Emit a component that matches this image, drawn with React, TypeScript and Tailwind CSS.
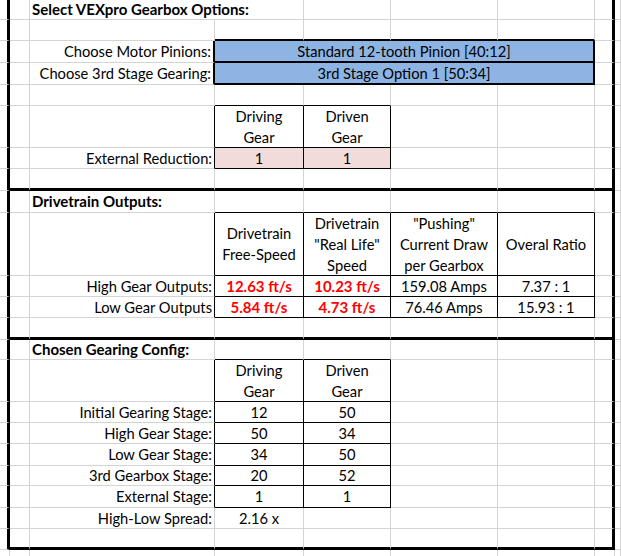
import React from "react";

type B = "g" | "k" | "k2" | "k3";

const RB: Record<B, string> = {
  g: "border-r border-r-[#d4d4d4]",
  k: "border-r border-r-black",
  k2: "border-r-2 border-r-black",
  k3: "border-r-[3px] border-r-black",
};
const BB: Record<B, string> = {
  g: "border-b border-b-[#d4d4d4]",
  k: "border-b border-b-black",
  k2: "border-b-2 border-b-black",
  k3: "border-b-[3px] border-b-black",
};

const inRange = (v: number, a: number, b: number) => v >= a && v <= b;

function rightBorder(row: number, col: number): B {
  if ((col === 0 || col === 7) && row <= 21) return "k3";
  if ((col === 2 || col === 6) && (row === 2 || row === 3)) return "k2";
  if (col === 2 && (row === 5 || row === 6 || inRange(row, 9, 11) || inRange(row, 14, 19))) return "k";
  if ((col === 3 || col === 4) && (row === 5 || row === 6 || inRange(row, 14, 19))) return "k";
  if (inRange(col, 3, 6) && inRange(row, 9, 11)) return "k";
  return "g";
}

function bottomBorder(row: number, col: number): B {
  if ((row === 7 || row === 12 || row === 21) && inRange(col, 1, 7)) return "k3";
  if (inRange(row, 1, 3) && inRange(col, 3, 6)) return "k2";
  if ((col === 3 || col === 4) && (inRange(row, 4, 6) || inRange(row, 13, 19))) return "k";
  if (inRange(col, 3, 6) && inRange(row, 8, 11)) return "k";
  return "g";
}

type Content = {
  text: React.ReactNode;
  align: "l" | "c" | "r";
  span?: number;
  bold?: boolean;
  red?: boolean;
  bg?: "blue" | "pink";
};

const L = (text: string): Content => ({ text, align: "r" });
const C = (text: React.ReactNode, extra: Partial<Content> = {}): Content => ({ text, align: "c", ...extra });
const RED = (text: string): Content => ({ text, align: "c", bold: true, red: true });
const lines = (...ls: string[]) => (
  <span className="flex flex-col items-center">
    {ls.map((l, i) => (
      <span key={i}>{l}</span>
    ))}
  </span>
);

const content: Record<string, Content> = {
  "0-2": { text: "Select VEXpro Gearbox Options:", align: "l", span: 2, bold: true },
  "2-2": L("Choose Motor Pinions:"),
  "2-3": C("Standard 12-tooth Pinion [40:12]", { span: 4, bg: "blue" }),
  "3-2": L("Choose 3rd Stage Gearing:"),
  "3-3": C("3rd Stage Option 1 [50:34]", { span: 4, bg: "blue" }),
  "5-3": C(lines("Driving", "Gear")),
  "5-4": C(lines("Driven", "Gear")),
  "6-2": L("External Reduction:"),
  "6-3": C("1", { bg: "pink" }),
  "6-4": C("1", { bg: "pink" }),
  "8-2": { text: "Drivetrain Outputs:", align: "l", bold: true },
  "9-3": C(lines("Drivetrain", "Free-Speed")),
  "9-4": C(lines("Drivetrain", "\"Real Life\"", "Speed")),
  "9-5": C(lines("\"Pushing\"", "Current Draw", "per Gearbox")),
  "9-6": C("Overal Ratio"),
  "10-2": L("High Gear Outputs:"),
  "10-3": RED("12.63 ft/s"),
  "10-4": RED("10.23 ft/s"),
  "10-5": C("159.08 Amps"),
  "10-6": C("7.37 : 1"),
  "11-2": L("Low Gear Outputs"),
  "11-3": RED("5.84 ft/s"),
  "11-4": RED("4.73 ft/s"),
  "11-5": C("76.46 Amps"),
  "11-6": C("15.93 : 1"),
  "13-2": { text: "Chosen Gearing Config:", align: "l", bold: true },
  "14-3": C(lines("Driving", "Gear")),
  "14-4": C(lines("Driven", "Gear")),
  "15-2": L("Initial Gearing Stage:"),
  "15-3": C("12"),
  "15-4": C("50"),
  "16-2": L("High Gear Stage:"),
  "16-3": C("50"),
  "16-4": C("34"),
  "17-2": L("Low Gear Stage:"),
  "17-3": C("34"),
  "17-4": C("50"),
  "18-2": L("3rd Gearbox Stage:"),
  "18-3": C("20"),
  "18-4": C("52"),
  "19-2": L("External Stage:"),
  "19-3": C("1"),
  "19-4": C("1"),
  "20-2": L("High-Low Spread:"),
  "20-3": C("2.16 x"),
};

const ROWS = 23;
const COLS = 9;

export default function App() {
  const cells: React.ReactNode[] = [];
  for (let row = 0; row < ROWS; row++) {
    let col = 0;
    while (col < COLS) {
      const c = content[`${row}-${col}`];
      const span = c?.span ?? 1;
      const last = col + span - 1;
      const r = rightBorder(row, last);
      const b = bottomBorder(row, col);
      const spanCls = span === 2 ? "col-span-2" : span === 4 ? "col-span-4" : "";
      const alignCls = !c
        ? ""
        : c.align === "r"
        ? "justify-end pr-[2px]"
        : c.align === "l"
        ? "justify-start pl-[2px]"
        : "justify-center";
      const bgCls = c?.bg === "blue" ? "bg-[#8db4e2]" : c?.bg === "pink" ? "bg-[#f2dcdb]" : "";
      const textCls = c?.red ? "text-[#ff0000]" : "text-black";
      cells.push(
        <div
          key={`${row}-${col}`}
          className={`flex items-center min-w-0 whitespace-nowrap leading-[21px] ${spanCls} ${RB[r]} ${BB[b]} ${alignCls} ${bgCls} ${textCls} ${c?.bold ? "font-bold text-[15px]" : "font-normal text-[14.7px]"}`}
        >
          {c?.text}
        </div>
      );
      col += span;
    }
  }
  return (
    <div className="w-[621px] h-[556px] overflow-hidden bg-white font-['Lato',sans-serif] text-[15px]">
      <div className="grid grid-cols-[10px_20px_185px_89px_87px_107px_97px_20px_6px] grid-rows-[20px_21px_22px_22px_21px_42px_21px_22px_22px_63px_21px_21px_22px_20px_42px_21px_21px_22px_20px_22px_21px_21px_7px]">
        {cells}
      </div>
    </div>
  );
}
